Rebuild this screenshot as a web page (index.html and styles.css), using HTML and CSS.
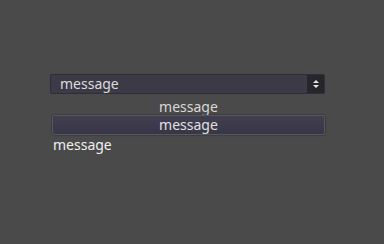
FILE: index.html
```
<!DOCTYPE html>
<html>
<head>
<meta charset="utf-8">
<link rel="stylesheet" href="styles.css">
</head>
<body>
<div class="panel">
  <div class="select">
    <span class="select-text">message</span>
    <span class="spin">
      <svg width="8" height="10" viewBox="0 0 8 10"><path d="M4 1 L7 4 L1 4 Z M4 9 L7 6 L1 6 Z" fill="#e6e6e6"/></svg>
    </span>
  </div>
  <div class="label-center">message</div>
  <div class="button">message</div>
  <div class="label-left">message</div>
</div>
</body>
</html>
```
FILE: styles.css
```
html, body {
  margin: 0;
  padding: 0;
  background: #4a4a4a;
  width: 384px;
  height: 244px;
  overflow: hidden;
  font-family: "Noto Sans", "DejaVu Sans", sans-serif;
  font-size: 14px;
}
.panel {
  display: flex;
  flex-direction: column;
  padding: 74px 0 0 50px;
  width: 275px;
}
.select {
  display: flex;
  height: 20px;
  box-sizing: border-box;
  border: 1px solid #2f2e36;
  background: #3b3a46;
  border-radius: 2px;
}
.select-text {
  flex: 1;
  color: #dcdcdc;
  line-height: 17px;
  padding-left: 9px;
}
.spin {
  width: 17px;
  background: #26252b;
  display: flex;
  align-items: center;
  justify-content: center;
}
.label-center {
  text-align: center;
  color: #d8d8d8;
  line-height: 17px;
  height: 17px;
  margin-top: 4px;
  padding-left: 2px;
}
.button {
  height: 20px;
  margin-left: 2px;
  box-sizing: border-box;
  border: 1px solid #575662;
  box-shadow: 0 0 1px 1px rgba(0, 0, 0, 0.18);
  background: linear-gradient(#403e4f, #383747);
  border-radius: 2px;
  color: #e0e0e0;
  text-align: center;
  line-height: 17px;
}
.label-left {
  color: #f0f0f0;
  line-height: 20px;
  padding-left: 3px;
}
```
